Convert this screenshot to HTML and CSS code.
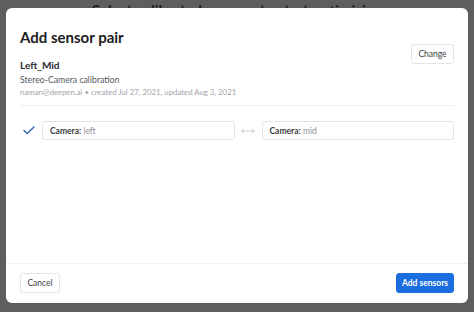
FILE: index.html
```html
<!DOCTYPE html>
<html>
<head>
<meta charset="utf-8">
<link rel="stylesheet" href="styles.css">
</head>
<body>
<div class="page-title">Select calibrated sensors to start optimizing</div>
<div class="modal">
  <div class="modal-body">
    <div class="summary">
      <div class="summary-info">
        <h2 class="modal-title">Add sensor pair</h2>
        <div class="pair-name">Left_Mid</div>
        <div class="pair-type">Stereo-Camera calibration</div>
        <div class="pair-meta">naman@deepen.ai • created Jul 27, 2021, updated Aug 3, 2021</div>
      </div>
      <button class="btn btn-change">Change</button>
    </div>
    <div class="divider"></div>
    <div class="pair-row">
      <div class="check">
        <svg width="12" height="9" viewBox="0 0 12 9"><path d="M1 4.6 L4.2 7.6 L11 1" fill="none" stroke="#2f63b4" stroke-width="1.4" stroke-linecap="round" stroke-linejoin="round"/></svg>
      </div>
      <div class="field"><b>Camera:</b> left</div>
      <div class="link">
        <svg width="16" height="6" viewBox="0 0 16 6"><path d="M2 3 H14 M3.8 1 L1.5 3 L3.8 5 M12.2 1 L14.5 3 L12.2 5" fill="none" stroke="#c8c8c8" stroke-width="0.9" stroke-linecap="round" stroke-linejoin="round"/></svg>
      </div>
      <div class="field"><b>Camera:</b> mid</div>
    </div>
  </div>
  <div class="modal-footer">
    <button class="btn btn-cancel">Cancel</button>
    <button class="btn btn-primary">Add sensors</button>
  </div>
</div>
</body>
</html>
```
FILE: styles.css
```css
html, body {
  margin: 0;
  padding: 0;
}
body {
  width: 474px;
  height: 312px;
  background: #5e5e5e;
  font-family: "Lato", "Noto Sans", sans-serif;
  position: relative;
  overflow: hidden;
}
.page-title {
  text-align: center;
  font-size: 15px;
  line-height: 18px;
  font-weight: 700;
  color: #1d1d1f;
  padding-top: 1px;
}
.modal {
  position: absolute;
  left: 6px;
  top: 8px;
  width: 462px;
  height: 295px;
  background: #fff;
  border-radius: 6px;
  display: flex;
  flex-direction: column;
}
.modal-body {
  flex: 1;
  padding: 19px 14px 0 14px;
}
.summary {
  display: flex;
  justify-content: space-between;
  align-items: flex-start;
}
.modal-title {
  margin: 0;
  font-size: 15px;
  line-height: 20px;
  font-weight: 700;
  color: #1b1d22;
}
.pair-name {
  margin-top: 11px;
  font-size: 10px;
  line-height: 14px;
  font-weight: 700;
  color: #2a2c31;
}
.pair-type {
  margin-top: 2px;
  font-size: 8.7px;
  line-height: 12px;
  color: #55585e;
}
.pair-meta {
  font-size: 7.8px;
  line-height: 12px;
  color: #a3a5a9;
}
.btn {
  font-family: "Lato", "Noto Sans", sans-serif;
  font-size: 8.5px;
  height: 20px;
  padding: 0 8px;
  border-radius: 3px;
  border: 1px solid #e3e4e6;
  background: #fff;
  color: #3b3d42;
  cursor: pointer;
}
.btn-change {
  margin-top: 17px;
  width: 43px;
  padding: 0;
}
.divider {
  margin-top: 7px;
  height: 1px;
  background: #efefef;
}
.pair-row {
  display: flex;
  align-items: center;
  margin-top: 15px;
}
.check {
  width: 22px;
  display: flex;
  padding-left: 3px;
  box-sizing: border-box;
}
.field {
  flex: 1;
  height: 19px;
  box-sizing: border-box;
  border: 1px solid #e2e3e6;
  border-radius: 3px;
  padding-left: 7px;
  display: flex;
  align-items: center;
  font-size: 8.5px;
  color: #909296;
  white-space: pre;
}
.field b {
  color: #3a3c41;
  font-weight: 700;
}
.link {
  width: 27px;
  display: flex;
  justify-content: center;
}
.modal-footer {
  border-top: 1px solid #f0f0f0;
  padding: 9px 14px 10px 14px;
  display: flex;
  justify-content: space-between;
  align-items: center;
}
.btn-cancel {
  width: 40px;
  padding: 0;
}
.btn-primary {
  width: 58px;
  padding: 0;
  background: #1a6ee0;
  border-color: #1a6ee0;
  color: #fff;
  font-weight: 700;
}
```
